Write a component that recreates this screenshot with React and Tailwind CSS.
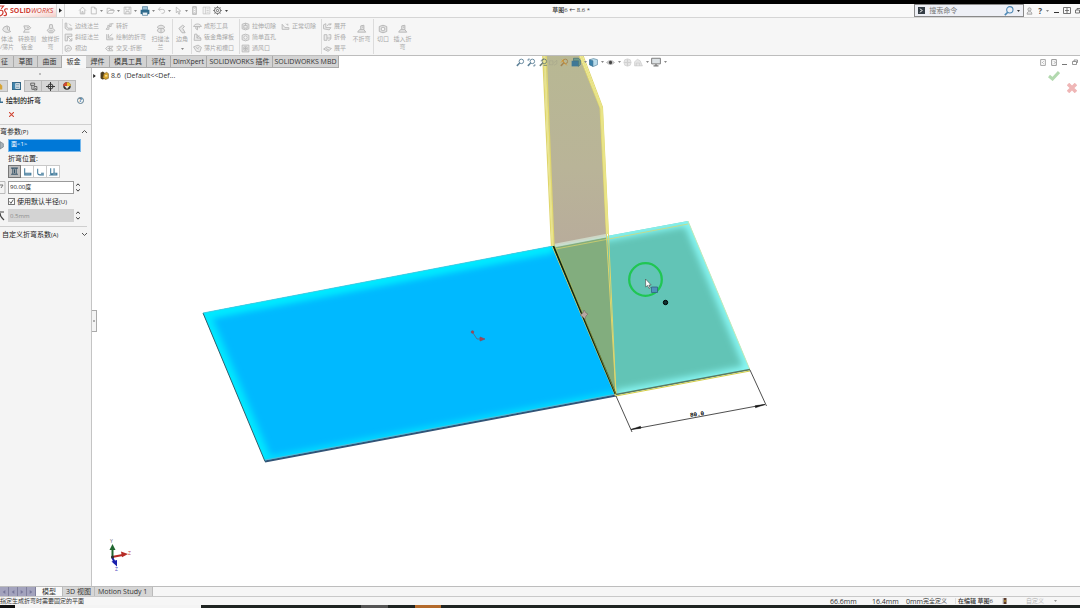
import React from "react";

const P = {
  home: <path d="M2 8 8 2l6 6M4 7v7h8V7M7 14v-4h2v4" />,
  page: <path d="M4 2h6l3 3v9H4zM10 2v3h3" />,
  open: <path d="M2 13V4h5l1 2h5v2M2 13l3-5h10l-3 5z" />,
  save: <path d="M2 2h12v12H2zM5 2v5h6V2M5 14v-4h6v4" />,
  undo: <path d="M3 6h7a3.500 3.500 0 0 1 0 7H8M6 2 2.500 6 6 9" />,
  cursor: <path d="m4 2 8 7H8.500l2 5-2 .5-2-5L4 12z" />,
  gear: <path d="M8 2.500a5.500 5.500 0 1 0 0 11 5.500 5.500 0 0 0 0-11M8 6a2 2 0 1 0 0 4 2 2 0 0 0 0-4M8 .5v2M8 13.500v2M.5 8h2M13.500 8h2M2.700 2.700l1.500 1.500M11.800 11.800l1.500 1.500M13.300 2.700l-1.500 1.500M4.200 11.800l-1.500 1.500" />,
  list: <path d="M2 2h12v12H2zM6 2v12M8 5h4M8 8h4M8 11h4" />,
  light: <path d="M5 1.500h6v13H5zM8 4v1M8 7.500v1M8 11v1" strokeWidth="2" />,
  flange: <path d="M2 2v9l4 3h8v-3H7L5 9V2zM9 3l4 4" />,
  base: <path d="M1 9c2 4 8 6 13 3L9 9 8 3 3 5zM8 3l4 2v5" />,
  convert: <path d="M3 3h8l3 3-3 3H5zM2 13h10M5 9l-2 4M8 6h3" />,
  loft: <path d="M6 1h4l1 6 3 3-3 4H5l-3-4 3-3zM6 7h4M5 11h6" />,
  hem: <path d="M2 4c5-4 12 0 11 5-1 4-7 5-8 1-1-3 4-4 5-2M2 4v8l4 2" />,
  miter: <path d="M2 2h12v4H6v8H2zM6 6l8 8M9 14h5V9" />,
  jog: <path d="M2 13h5V8h4V3h4M2 13l2-3h1V6h4V2" />,
  sketch: <path d="M3 2v10h11M6 2v7h8v3M8 6l5-4" />,
  cross: <path d="M1 8 5 4h9l-3 4 3 4H5zM5 8h6M8 4v8" />,
  sweep: <path d="M2 5c4-4 8-4 12 0l-2 2H4zM4 7l-2 4c4 4 8 4 12 0l-2-4M8 7v6" />,
  corner: <path d="M9 2 3 7l5 7h5l-4-7 3-3z" />,
  form: <path d="M1 8c2-6 12-6 14 0H1zM5 8v4l3 2V8M11 8v3" />,
  gusset: <path d="M2 13h12V9H7V2H3zM7 9l4-5M7 4l7 5" />,
  slot: <path d="M1 5l8-3 6 4-3 8-6-1zM5 6l5 3M9 5l2 2" />,
  cut: <path d="M2 4l6-2 6 2v8l-6 2-6-2zM5 6h6v5H5zM8 2v4" />,
  hole: <path d="M2 4l6-2 6 2v8l-6 2-6-2zM8 5a3 3 0 1 0 0 6 3 3 0 0 0 0-6" />,
  vent: <path d="M2 2h12v12H2zM5 5h6v6H5zM8 5v6M5 8h6" />,
  normal: <path d="M2 4v9h12v-3H7zM9 3l3 3M12 6V3" />,
  unfold: <path d="M1 12V5l4-2v7h9l-3 4zM8 7c1-5 5-4 6-2M14 2v3h-3" />,
  fold: <path d="M2 13V3h5v10zM7 9h7V3h-4M9 13c4 0 5-2 5-4" />,
  flat: <path d="M1 9l6-4 8 3-6 5zM5 8l6 3" />,
  nobend: <path d="M1 13h13l-3-4H4zM6 9V3l5-1v7M8 5h2" />,
};

function Icon({ name, className = "size-2 text-[#b9b9b9]", w = 1.3 }) {
  return (
    <svg viewBox="0 0 16 16" fill="none" stroke="currentColor" strokeWidth={w} strokeLinejoin="round" className={`shrink-0 ${className}`} aria-hidden="true">
      {P[name]}
    </svg>
  );
}

function Caret({ className = "text-[#888]" }) {
  return (
    <svg viewBox="0 0 6 4" className={`h-[2px] w-[3px] shrink-0 ${className}`} aria-hidden="true">
      <path d="M0 0h6L3 4z" fill="currentColor" />
    </svg>
  );
}

function Small({ icon, children }) {
  return (
    <button type="button" className="flex h-[11px] items-center gap-[2px] whitespace-nowrap">
      <Icon name={icon} w={1.6} className="size-[9px] fill-[#ececec] text-[#b8b8b8]" />
      {children}
    </button>
  );
}

function Big({ icon, lines, className, menu }) {
  return (
    <button type="button" className={`flex shrink-0 flex-col items-center pt-[5px] leading-[8px] whitespace-nowrap ${className}`}>
      <Icon name={icon} w={1.6} className="mb-px size-[10px] fill-[#e6e6e6] text-[#b8b8b8]" />
      {lines.map((l) => <span key={l}>{l}</span>)}
      {menu && <span className="pt-[5px]"><Caret /></span>}
    </button>
  );
}

function Group({ children, className = "" }) {
  return <div className={`flex shrink-0 border-r border-[#dcdcdc] ${className}`}>{children}</div>;
}

function Col({ children, className = "" }) {
  return <div className={`flex shrink-0 flex-col pt-[2px] ${className}`}>{children}</div>;
}

function TitleBar() {
  const quick = [["home", false], ["page", true], ["open", true], ["save", true]];
  return (
    <header className="flex h-[14px] shrink-0 items-center border-b border-[#d5d5d5] bg-[#f9f9f9]">
      <div className="flex h-full w-[56px] shrink-0 items-center gap-[2px] bg-linear-to-br from-white from-50% to-[#f3cdc7] text-[8px] text-[#cf3f35]">
        <svg viewBox="0 0 16 24" className="h-[12px] w-[8px] shrink-0" fill="none" stroke="currentColor" strokeWidth="2.400" strokeLinecap="round" aria-hidden="true">
          <path d="M1 2h6L3 7M0 11c7-3 9 8 0 11M15 8c-6-2-7 3-4 6s3 8-3 7" />
        </svg>
        <span className="text-[7px] leading-none"><b>SOLID</b><span className="italic">WORKS</span></span>
      </div>
      <button type="button" aria-label="展开菜单" className="flex h-full w-[9px] items-center justify-center border-x border-[#d5d5d5]">
        <svg viewBox="0 0 4 6" className="h-[5px] w-[3px]"><path d="M0 0v6l4-3z" fill="#222" /></svg>
      </button>
      <div className="flex shrink-0 items-center pl-[13px]">
        {quick.map(([n, menu]) => (
          <button key={n} type="button" aria-label={n} className={`flex items-center gap-[2px] ${menu ? "w-[17px]" : "w-[11px]"}`}>
            <Icon name={n} className="size-[9px] text-[#b0b0b0]" />
            {menu && <Caret />}
          </button>
        ))}
        <button type="button" aria-label="print" className="flex w-[17px] items-center gap-[2px]">
          <svg viewBox="0 0 16 16" className="size-[10px]"><path d="M4 1h8v5H4z" fill="#9fc4d8" stroke="#3d6f8d" /><path d="M1 6h14v7H1z" fill="#2d6a8c" /><path d="M4 10h8v5H4z" fill="#e8f1f6" stroke="#3d6f8d" /></svg>
          <Caret />
        </button>
        <button type="button" aria-label="undo" className="flex w-[17px] items-center gap-[2px]"><Icon name="undo" className="size-[9px] text-[#b0b0b0]" /><Caret /></button>
        <button type="button" aria-label="select" className="flex w-[16px] items-center gap-[2px]"><Icon name="cursor" className="size-[9px] text-[#b0b0b0]" /><Caret /></button>
        <button type="button" aria-label="rebuild" className="w-[12px]"><Icon name="light" className="size-[9px] text-[#b0b0b0]" /></button>
        <button type="button" aria-label="properties" className="w-[11px]"><Icon name="list" className="size-[9px] text-[#c0c0c0]" /></button>
        <button type="button" aria-label="options" className="flex items-center gap-[3px]"><Icon name="gear" className="size-[9px] text-[#555]" w={1.5} /><Caret className="text-[#444]" /></button>
      </div>
      <h1 className="flex-1 text-center text-[6px] font-medium text-[#333]">草图6 ← 8.6 *</h1>
      <label className="flex h-[13px] w-[110px] shrink-0 items-center border border-[#8a8a8a] bg-[#eef0f6] pl-[3px]">
        <svg viewBox="0 0 8 8" className="size-[7px] shrink-0"><path d="M0 0h8v8H0z" fill="#333c44" /><path d="m2 2 3 2-3 2" fill="none" stroke="#fff" /></svg>
        <input aria-label="搜索命令" placeholder="搜索命令" className="min-w-0 flex-1 bg-transparent pl-[4px] text-[7px] leading-none outline-none placeholder:text-[#777]" />
        <svg viewBox="0 0 12 12" className="size-[10px] shrink-0" fill="none" stroke="#4d88b5" strokeWidth="1.300"><circle cx="7" cy="4.500" r="3.800" /><path d="M4.500 7.500 1 11" strokeWidth="2" /></svg>
        <span className="flex px-[3px]"><Caret className="text-[#333]" /></span>
      </label>
      <div className="flex shrink-0 items-center text-[#444]">
        <button type="button" aria-label="用户" className="pl-[2px]"><svg viewBox="0 0 8 10" className="h-[8px] w-[7px]" fill="#e2e2e2" stroke="#999"><circle cx="4" cy="3" r="2" /><path d="M1 9c0-5 6-5 6 0z" /></svg></button>
        <button type="button" className="flex h-[12px] items-center gap-[4px] pl-[5px] text-[8px] leading-[12px] font-bold"><span>?</span><Caret /></button>
        <button type="button" aria-label="最小化" className="ml-[5px] h-[5px] w-[5px] border-b border-[#333]" />
        <button type="button" aria-label="平铺" className="pl-[4px]"><svg viewBox="0 0 16 14" className="h-[7px] w-[8px]" fill="none" stroke="#666" strokeWidth="1.800"><path d="M1 1h14v12H1zM8 1v12M4 7h8" /></svg></button>
        <button type="button" aria-label="还原" className="pl-[4px]"><svg viewBox="0 0 10 12" className="h-[7px] w-[5px]" fill="none" stroke="#666" strokeWidth="1.800"><path d="M4 5V2h8M1 5h8v6H1z" /></svg></button>
      </div>
    </header>
  );
}

function Ribbon() {
  return (
    <div className="flex h-[38px] shrink-0 overflow-hidden border-b border-[#bdbdbd] bg-[#f6f6f6] py-px text-[6px] text-[#a8a8a8]">
      <Group className="w-[63px]">
        <Big icon="base" lines={["体法", "/薄片"]} className="w-[15px] pr-px" />
        <Big icon="convert" lines={["转换到", "钣金"]} className="w-[24px]" />
        <Big icon="loft" lines={["放样折", "弯"]} className="w-[23px]" />
      </Group>
      <Group className="w-[110px] pl-px">
        <Col className="w-[41px]"><Small icon="flange">边线法兰</Small><Small icon="miter">斜接法兰</Small><Small icon="hem">褶边</Small></Col>
        <Col className="w-[44px]"><Small icon="jog">转折</Small><Small icon="sketch">绘制的折弯</Small><Small icon="cross">交叉-折断</Small></Col>
        <Big icon="sweep" lines={["扫描法", "兰"]} className="w-[23px]" />
      </Group>
      <Group className="w-[19px]"><Big icon="corner" lines={["边角"]} className="w-[18px]" menu /></Group>
      <Group className="w-[48px] pl-px">
        <Col><Small icon="form">成形工具</Small><Small icon="gusset">钣金角撑板</Small><Small icon="slot">薄片和槽口</Small></Col>
      </Group>
      <Group className="w-[82px] pl-px">
        <Col className="w-[40px]"><Small icon="cut">拉伸切除</Small><Small icon="hole">简单直孔</Small><Small icon="vent">通风口</Small></Col>
        <Col><Small icon="normal">正常切除</Small></Col>
      </Group>
      <Group className="w-[52px] pl-px">
        <Col className="w-[27px]"><Small icon="unfold">展开</Small><Small icon="fold">折叠</Small><Small icon="flat">展平</Small></Col>
        <Big icon="nobend" lines={["不折弯"]} className="w-[23px]" />
      </Group>
      <Big icon="hole" lines={["切口"]} className="w-[18px]" />
      <Big icon="nobend" lines={["插入折", "弯"]} className="w-[21px]" />
    </div>
  );
}

const tabs = [
  ["征", "w-[14px] pr-[4px]"], ["草图", "w-[24px]"], ["曲面", "w-[24px]"], ["钣金", "w-[24px]"], ["焊件", "w-[24px]"],
  ["模具工具", "w-[37px]"], ["评估", "w-[24px]"], ["DimXpert", "w-[36px]"], ["SOLIDWORKS 插件", "w-[66px]"], ["SOLIDWORKS MBD", "w-[66px]"],
];

function Mag({ extra, color = "#5b7f96" }) {
  return (
    <svg viewBox="0 0 16 16" className="size-[9px]" fill="none" stroke={color} strokeWidth="1.600" aria-hidden="true">
      <circle cx="9.500" cy="6" r="4" /><path d="m6.500 9-5 5" strokeWidth="2.600" />{extra}
    </svg>
  );
}

function ViewTools() {
  return (
    <div className="flex items-center">
      <button type="button" aria-label="整屏显示" className="w-[11px]"><Mag /></button>
      <button type="button" aria-label="局部放大" className="w-[12px]"><Mag extra={<path d="M2 2h3M2 2v3M14 14h-3M14 14v-3" />} /></button>
      <button type="button" aria-label="上一视图" className="w-[10px]"><Mag extra={<path d="M3 5 9 1M8 13h6" />} color="#6d7f76" /></button>
      <button type="button" aria-label="剖面" className="w-[11px] opacity-30"><svg viewBox="0 0 16 16" className="size-[9px]" fill="none" stroke="#777"><path d="M1 5h6v7H1zM8 9l6-5v6l-5 3" /></svg></button>
      <button type="button" aria-label="动态注解" className="w-[11px]"><Mag extra={<path d="m3 3 9 10M2 8l5-6" stroke="#d6952f" />} color="#a58450" /></button>
      <button type="button" aria-label="视图定向" className="flex w-[18px] items-center gap-[3px]"><svg viewBox="0 0 16 16" className="size-[10px]"><path d="M1 6h11v9H1z" fill="#3f7896" /><path d="M4 6V2h8l3 3v7l-3 3V6z" fill="#6f9c8d" stroke="#3f6872" /></svg><Caret /></button>
      <button type="button" aria-label="显示样式" className="flex w-[17px] items-center gap-[3px]"><svg viewBox="0 0 16 16" className="size-[9px]" stroke="#41718e"><path d="m1 3 7-2 7 2v9l-7 3-7-3z" fill="#b9dbea" /><path d="M1 3l6 2v10l-6-3z" fill="#3b83ad" /></svg><Caret /></button>
      <button type="button" aria-label="隐藏项目" className="flex w-[17px] items-center gap-[3px]"><svg viewBox="0 0 16 16" className="size-[9px]"><path d="M1 8q7-7 14 0-7 7-14 0" fill="#ddd" stroke="#888" /><circle cx="8" cy="8" r="3" fill="#444" /></svg><Caret /></button>
      <button type="button" aria-label="编辑外观" className="w-[11px]"><svg viewBox="0 0 16 16" className="size-[9px]"><circle cx="8" cy="8" r="6.500" fill="#e6e6e6" stroke="#ccc" /><path d="M8 2v12M2 8h12" stroke="#d0d0d0" strokeWidth="2" /></svg></button>
      <button type="button" aria-label="应用布景" className="flex w-[17px] items-center gap-[3px]"><svg viewBox="0 0 16 16" className="size-[9px]" fill="#e6e6e6" stroke="#c4c4c4"><path d="M1 14V7l5-5 5 3 4 9zM4 14v-5h6v5" /></svg><Caret /></button>
      <button type="button" aria-label="视图设定" className="flex items-center gap-[3px]"><svg viewBox="0 0 16 16" className="size-[10px]"><path d="M1 2h14v9H1z" fill="#dde2e5" stroke="#777" strokeWidth="1.500" /><path d="M7 11h2v2h3v2H4v-2h3z" fill="#777" /></svg><Caret /></button>
    </div>
  );
}

function Scene() {
  return (
    <svg viewBox="0 56 1080 530" className="absolute inset-0 h-full w-full" aria-label="钣金模型">
      <defs>
        <clipPath id="left"><path d="M203 313 553 246 616 395 265 461z" /></clipPath>
        <clipPath id="right"><path d="M553 246 688 221 750 370 616 395z" /></clipPath>
        <filter id="glow" x="-10%" y="-10%" width="120%" height="120%"><feGaussianBlur stdDeviation="3.500" /></filter>
        <linearGradient id="plate" x1="0" y1="0" x2="0" y2="1"><stop offset="0" stopColor="#b8b893" /><stop offset=".6" stopColor="#b9b498" /><stop offset="1" stopColor="#b8ac9b" /></linearGradient>
      </defs>
      <path d="M203 313 553 246 616 395 265 461z" fill="#00b9ff" />
      <g clipPath="url(#left)">
        <path d="M553 246 203 313 265 461" fill="none" stroke="#00eaff" strokeWidth="13" filter="url(#glow)" />
        <path d="M553 246 203 313M265 461 616 395" fill="none" stroke="#00eaff" strokeWidth="6" filter="url(#glow)" />
      </g>
      <path d="m203 313 62 148.500" stroke="#34606d" />
      <path d="m265 461.500 351-66" stroke="#315477" strokeWidth="2" />
      <path d="m265 460 351-66" stroke="#6eb1cb" strokeWidth=".8" />
      <path d="m203 313 350-67" stroke="#47c6dc" strokeWidth=".8" />
      <path d="M543 50h34l24 59 6 127-54 10z" fill="url(#plate)" />
      <path d="M553 246 688 221 750 370 616 395z" fill="#62c4b6" />
      <g clipPath="url(#right)"><path d="M553 246 688 221 750 370 616 395" fill="none" stroke="#8bfaf8" strokeWidth="9" filter="url(#glow)" /></g>
      <path d="m553 247 54-10 9 158z" fill="#82ad7e" />
      <path d="m555 245.500 52-10" stroke="#d2dfce" strokeWidth="3.500" opacity=".85" />
      <g fill="none" stroke="#dfd56c" strokeWidth="1">
        <path d="M542.500 50 551.500 246M546 50l8 196" strokeWidth="1.300" />
        <path d="M544.300 50 552.700 246" stroke="#e9e48b" strokeWidth="2" />
        <path d="m577 50 23 58 6.500 128 9.500 159M581 50l21.500 57 6 128 7.500 160" />
        <path d="m556 249 132-25" strokeWidth=".7" />
        <path d="m552.500 247 63 149" />
        <path d="m688 221 62 149" stroke="#c4eabb" />
      </g>
      <path d="m579 50 22.500 58 6 126" fill="none" stroke="#e9e486" strokeWidth="2.500" />
      <path d="m553.500 246 62 148" stroke="#10250f" strokeWidth="1.900" />
      <path d="m554.800 246 61 148" stroke="#d9d85a" strokeWidth=".5" />
      <path d="m616 394.500 134-25" stroke="#5b7960" strokeWidth="1.500" />
      <path d="m616 396 134-25" stroke="#d5ce46" strokeWidth="1" />
      <g stroke="#222" strokeWidth=".8" fill="#111">
        <path d="m616 396 16 36M750 370l16.500 36M631 429.500l134-25" />
        <path d="m631 429.500 9.500-3.200.4 2zM765 404.500l-9.500 3.200-.4-2z" strokeWidth=".5" />
      </g>
      <text x="697" y="416" transform="rotate(-8 697 414)" textAnchor="middle" className="fill-black font-['Liberation_Mono'] text-[6px] font-bold">80.0</text>
      <circle cx="645.500" cy="279.500" r="16.300" fill="none" stroke="#20c653" strokeWidth="2.300" />
      <path d="m645.500 279 .2 8 1.800-1.500 1.500 3 1.200-.6-1.400-2.900h2.400z" fill="#fff" stroke="#444" strokeWidth=".6" />
      <path d="M651.500 287h6v5.500h-6z" fill="#4f91bc" stroke="#2b5c7d" strokeWidth=".7" />
      <circle cx="665.500" cy="302.500" r="2.200" fill="#133" stroke="#000" />
      <g fill="#b7a8a2" stroke="#756a65" strokeWidth=".6"><path d="m584 310 2 3 2 1-2 2-1 3-2-2-3-2 3-2z" /></g>
      <g stroke="#7a5361" fill="#ae4056" strokeWidth=".7"><path d="m473 333 4 6h6" fill="none" /><circle cx="472.500" cy="332" r="1.300" /><path d="m480 337 5 2-5 2z" /></g>
      <g strokeWidth="2">
        <path d="m112 557 12-2.200" stroke="#b62b25" /><path d="m121 551.500 7 2.500-6 3.300z" fill="#b62b25" />
        <path d="m112 557 2.500 5" stroke="#1a20ac" /><path d="m111.500 561.500 5.500-1.500v6.500z" fill="#1a20ac" />
        <path d="M112.500 557v-8" stroke="#20662f" /><path d="m109.500 550 3-6 3 6z" fill="#20662f" />
        <circle cx="112.500" cy="557" r="1.500" fill="#303030" />
      </g>
      <g className="font-['Open_Sans'] text-[5px]">
        <text x="110" y="543" fill="#667">Y</text><text x="128" y="555" fill="#b44">Z</text><text x="115" y="571" fill="#44b">Z</text>
      </g>
    </svg>
  );
}

function Spinner() {
  return (
    <span className="flex w-[7px] flex-col items-center justify-between py-[2px]">
      <button type="button" aria-label="增加" className="flex"><svg viewBox="0 0 6 4" className="h-[3px] w-[4px]" fill="none" stroke="#333" strokeWidth="1.500"><path d="m0 4 3-3 3 3" /></svg></button>
      <button type="button" aria-label="减少" className="flex"><svg viewBox="0 0 6 4" className="h-[3px] w-[4px]" fill="none" stroke="#333" strokeWidth="1.500"><path d="m0 0 3 3 3-3" /></svg></button>
    </span>
  );
}

function Chevron({ up }) {
  return <svg viewBox="0 0 10 6" className="h-[3px] w-[5px]" fill="none" stroke="#444" strokeWidth="1.800" aria-hidden="true"><path d={up ? "m0 6 5-5 5 5" : "m0 0 5 5 5-5"} /></svg>;
}

const bends = [
  "M2 2h12M5 2v11M11 2v11M2 13h12M8 4v7",
  "M3 2v9h4M3 11h11v3H3z",
  "M3 3v7c0 3 2 4 4 4h7M9 11h5",
  "M3 2v10h4M9 2v8M3 14h11v-3H8z",
];

function Panel() {
  return (
    <aside className="flex w-[92px] shrink-0 flex-col border-r border-[#c4c4c4] bg-[#f4f4f4] text-[7px] leading-none text-[#222]">
      <div className="flex h-[12px] items-center justify-center bg-[#f1f1f1] pr-[12px]"><span className="size-[2px] rounded-full bg-[#aaa]" /></div>
      <nav className="flex h-[12px] shrink-0 pr-[15px]">
        <button type="button" aria-label="特征树" className="flex w-[8px] items-center border border-l-0 border-[#b9b9b9] bg-[#d6d6d6]"><svg viewBox="0 0 4 8" className="h-[7px] w-[3px]"><path d="M0 0l3 3v5H0z" fill="#d6a437" /></svg></button>
        <button type="button" aria-label="属性" className="flex w-[16px] items-center justify-center bg-[#f4f4f4]"><svg viewBox="0 0 16 14" className="h-[8px] w-[9px]"><path d="M1 1h14v12H1z" fill="#fff" stroke="#356785" strokeWidth="2" /><path d="M1 1h5v12H1z" fill="#4285ac" /><path d="M7 5h6M7 9h6" stroke="#356785" strokeWidth="1.500" /></svg></button>
        <button type="button" aria-label="配置" className="flex w-[18px] items-center justify-center border border-[#b9b9b9] bg-[#d6d6d6]"><svg viewBox="0 0 16 16" className="size-[9px]" fill="none" stroke="#555" strokeWidth="1.500"><path d="M3 2h7v4H3zM5 6v7h4M9 8h5v6H9zM11 11l3 3" /></svg></button>
        <button type="button" aria-label="尺寸" className="flex w-[17px] items-center justify-center border border-l-0 border-[#b9b9b9] bg-[#d6d6d6]"><svg viewBox="0 0 16 16" className="size-[9px]" fill="none" stroke="#333" strokeWidth="1.700"><circle cx="8" cy="8" r="4.500" /><path d="M8 0v16M0 8h16" /></svg></button>
        <button type="button" aria-label="外观" className="flex w-[17px] items-center justify-center border border-l-0 border-[#b9b9b9] bg-[#d6d6d6]"><svg viewBox="0 0 16 16" className="size-[8px]"><circle cx="8" cy="8" r="7.500" fill="#333" /><path d="M8 8V.5A7.500 7.500 0 0 0 .5 8z" fill="#d04b33" /><path d="M8 8h7.500A7.500 7.500 0 0 0 8 .5z" fill="#e9bd35" /><path d="M3 8h10l-5 6z" fill="#e9e4da" /></svg></button>
      </nav>
      <div className="flex h-[16px] items-center">
        <svg viewBox="0 0 4 8" className="mr-[3px] h-[8px] w-[3px]"><path d="M0 1v6h4" fill="none" stroke="#3a6f91" strokeWidth="2" /></svg>
        <h2 className="flex-1 font-medium">绘制的折弯</h2>
        <button type="button" className="mr-[7px] flex size-[7px] items-center justify-center rounded-full border border-[#5b7e92] text-[6px] font-bold text-[#44697e]">?</button>
      </div>
      <div className="flex h-[17px] items-start border-b border-[#cfcfcf] pt-[4px] pl-[9px]">
        <button type="button" aria-label="取消"><svg viewBox="0 0 8 8" className="size-[5px]" stroke="#cf4433" strokeWidth="1.700"><path d="m0 0 8 8M8 0 0 8" /></svg></button>
      </div>
      <button type="button" className="mr-[4px] flex h-[13px] items-center justify-between"><span>弯参数<small className="text-[6px]">(P)</small></span><Chevron up /></button>
      <div className="flex h-[14px] items-center">
        <svg viewBox="0 0 6 12" className="mr-[4px] h-[10px] w-[4px]"><path d="M0 1l5 3v5l-5 3z" fill="#a9b2b8" stroke="#6c7880" /></svg>
        <button type="button" className="h-[13px] w-[73px] border border-[#76b8ec] bg-[#0078d7] pb-[2px] pl-[2px] text-left text-[6px] leading-[8px] text-white">面&lt;1&gt;</button>
      </div>
      <p className="flex h-[13px] items-center pl-[8px]">折弯位置:</p>
      <div className="flex pl-[8px]">
        {bends.map((d, i) => (
          <button key={d} type="button" aria-label={`折弯位置 ${i + 1}`} className={`flex h-[13px] w-[13px] items-center justify-center border ${i === 0 ? "border-[#777] bg-[#bdbdbd]" : "border-l-0 border-[#c9c9c9] bg-white"}`}>
            <svg viewBox="0 0 16 16" className="size-[9px]" fill="none" stroke={i === 0 ? "#39566a" : "#3b7698"} strokeWidth="1.800"><path d={d} /></svg>
          </button>
        ))}
      </div>
      <div className="mt-[3px] flex h-[13px] items-stretch">
        <svg viewBox="0 0 6 13" className="mr-[2px] h-[13px] w-[6px]" fill="none" stroke="#777"><path d="M0 .5h5v12H0" stroke="#bbb" /><path d="M0 4h3l-2 3" /></svg>
        <input aria-label="角度" defaultValue="90.00度" className="w-[66px] border border-[#9a9a9a] bg-white pb-[2px] pl-px text-[6px] leading-none outline-none" />
        <Spinner />
      </div>
      <label className="flex h-[15px] items-center gap-[2px] pl-[8px]">
        <input type="checkbox" defaultChecked className="peer sr-only" />
        <span className="flex size-[7px] items-center justify-center border border-[#777] bg-white"><svg viewBox="0 0 8 8" className="size-[5px]" fill="none" stroke="#333" strokeWidth="1.300"><path d="m1 4 2 3 4-6" /></svg></span>
        <span>使用默认半径<small className="text-[6px]">(U)</small></span>
      </label>
      <div className="flex h-[13px] items-stretch">
        <svg viewBox="0 0 6 13" className="mr-[2px] h-[13px] w-[6px]" fill="none" stroke="#444" strokeWidth="1.200"><path d="M0 3h4M0 4c0 4 2 5 4 7" /></svg>
        <input aria-label="半径" disabled defaultValue="0.5mm" className="w-[66px] bg-[#d3d3d3] pl-[2px] text-[6px] leading-none text-[#8d8d8d]" />
        <Spinner />
      </div>
      <button type="button" className="mt-[4px] mr-[4px] flex h-[15px] items-center justify-between border-t border-[#cfcfcf] pl-[2px]"><span>自定义折弯系数<small className="text-[6px]">(A)</small></span><Chevron /></button>
    </aside>
  );
}

export default function App() {
  return (
    <div className="flex h-screen flex-col overflow-hidden bg-white font-['Open_Sans','Noto_Sans_CJK_SC',sans-serif]">
      <div className="h-[4px] shrink-0 bg-black" />
      <TitleBar />
      <Ribbon />
      <main className="relative flex min-h-0 flex-1 flex-col">
        <Scene />
        <div className="relative flex h-[12px] shrink-0 items-stretch">
          <nav className="flex text-[7px] leading-none text-[#333]">
            {tabs.map(([t, w]) => (
              <button key={t} type="button" className={`flex shrink-0 items-center justify-center border-r border-b whitespace-nowrap ${w} ${t === "钣金" ? "border-[#f6f6f6] bg-[#f6f6f6]" : "border-[#aaa] bg-[#d3d3d3]"}`}>{t}</button>
            ))}
          </nav>
          <div className="flex flex-1 pl-[177px]"><ViewTools /></div>
          <div className="flex items-center gap-[5px] pr-[2px]">
            <button type="button" aria-label="左窗格"><svg viewBox="0 0 10 12" className="h-[7px] w-[6px]" fill="none" stroke="#999" strokeWidth="1.500"><path d="M1 1h8v10H1zM6 4 4 6l2 2" /></svg></button>
            <button type="button" aria-label="右窗格"><svg viewBox="0 0 10 12" className="h-[7px] w-[6px]" fill="none" stroke="#888" strokeWidth="1.500"><path d="M1 1h8v10H1zM5 4l2 2-2 2" /></svg></button>
            <button type="button" aria-label="最小化" className="h-[5px] w-[5px] border-b border-[#777]" />
            <button type="button" aria-label="还原"><svg viewBox="0 0 12 12" className="size-[6px]" fill="none" stroke="#777" strokeWidth="1.500"><path d="M4 5V2h7v5H9M1 5h8v6H1z" /></svg></button>
          </div>
        </div>
        <div className="relative flex min-h-0 flex-1">
          <Panel />
          <button type="button" aria-label="折叠面板" className="mb-[12px] flex h-[22px] w-[5px] items-center justify-center self-center border border-l-0 border-[#aaa] bg-[#f4f4f4]"><span className="size-[2px] rounded-full bg-[#999]" /></button>
          <div className="-ml-[4px] flex flex-1 items-start justify-between">
            <div className="flex h-[15px] items-center text-[7px] leading-none text-[#333]">
              <svg viewBox="0 0 4 6" className="h-[4px] w-[3px]"><path d="M0 0v6l4-3z" fill="#222" /></svg>
              <svg viewBox="0 0 16 16" className="mr-[2px] ml-[4px] size-[9px]"><path d="M1 3l4-2 3 2v11l-4 1-3-2z" fill="#4c3d1f" /><path d="M7 5l5-3 3 3v8l-5 2-5-3z" fill="#d8a52e" stroke="#725520" /><path d="M9 7h4v3H9z" fill="#f6dc89" /></svg>
              <span className="whitespace-pre">8.6  (Default&lt;&lt;Def...</span>
            </div>
            <div className="flex items-start gap-[7px] pt-[3px] pr-[3px]">
              <button type="button" aria-label="确定"><svg viewBox="0 0 12 10" className="h-[10px] w-[12px]" fill="none" stroke="#b3d9af" strokeWidth="3"><path d="m1 5 3.500 3L11 1" /></svg></button>
              <button type="button" aria-label="取消" className="pt-[12px]"><svg viewBox="0 0 10 10" className="size-[10px]" fill="none" stroke="#efb6b6" strokeWidth="3.500"><path d="m1 1 8 8M9 1 1 9" /></svg></button>
            </div>
          </div>
        </div>
      </main>
      <nav className="flex h-[10px] shrink-0 border-t border-[#bdbdbd] bg-[#f6f6f6] text-[7px] leading-none text-[#333]">
        <div className="flex w-[36px] shrink-0 bg-[#a3a3bd]">
          {["M5 0v6L1 3z", "M5 0v6L1 3z", "M1 0v6l4-3z", "M1 0v6l4-3z"].map((d, i) => (
            <button key={i} type="button" aria-label={`滚动 ${i + 1}`} className="flex flex-1 items-center justify-center border-r border-[#7f7f9c]"><svg viewBox="0 0 6 6" className="size-[4px]"><path d={d} fill="#77779a" /></svg></button>
          ))}
        </div>
        <button type="button" className="flex w-[26px] items-center justify-center bg-[#f9f9f9]">模型</button>
        <button type="button" className="flex w-[33px] items-center justify-center border-x border-[#bbb] bg-[#d6d6d6] whitespace-nowrap">3D 视图</button>
        <button type="button" className="flex w-[58px] items-center border-r border-[#bbb] bg-[#d6d6d6] pl-[3px] whitespace-nowrap">Motion Study 1</button>
      </nav>
      <footer className="flex h-[9px] shrink-0 items-center border-t border-[#c9c9c9] bg-[#f6f6f6] text-[6px] leading-none whitespace-nowrap text-[#333]">
        <span className="flex-1">指定生成折弯时需要固定的平面</span>
        <span className="w-[42px] text-[7px]">66.6mm</span>
        <span className="w-[34px] text-[7px]">16.4mm</span>
        <span className="w-[17px] text-[7px]">0mm</span>
        <span className="w-[32px]">完全定义</span>
        <span className="w-[48px] border-x border-[#ddd] pl-[2px] font-medium">在编辑 草图6</span>
        <span className="w-[23px]"><svg viewBox="0 0 4 8" className="h-[6px] w-[4px]"><path d="M0 0h4v8H0z" fill="#5b3a2a" /><path d="M1 3h2v2H1z" fill="#d8b13a" /></svg></span>
        <span className="w-[28px] text-[#b5b5b5]">自定义</span>
        <span className="w-[26px]"><Caret className="text-[#999]" /></span>
      </footer>
      <div className="flex h-[3px] shrink-0 bg-[#1f2422]">
        <span className="w-[15px] bg-[#111]" /><span className="w-[186px] bg-[#f4f4f4]" /><span className="w-[160px]" /><span className="w-[27px] bg-[#555]" /><span className="w-[27px]" /><span className="w-[26px] bg-[#b36a2b]" />
      </div>
    </div>
  );
}
